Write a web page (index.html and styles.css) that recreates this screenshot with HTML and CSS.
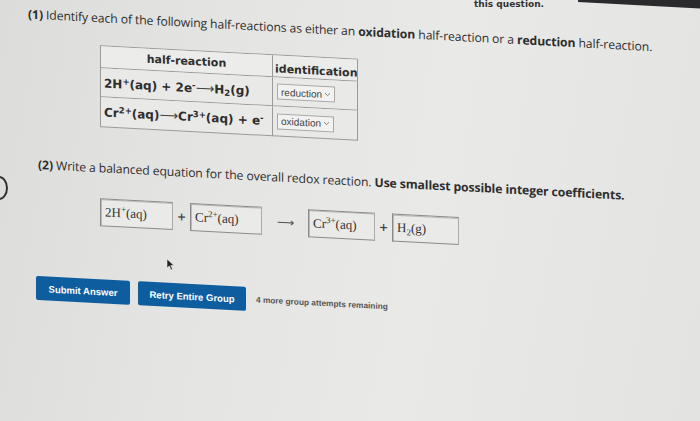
FILE: index.html
```html
<!DOCTYPE html>
<html>
<head>
<meta charset="utf-8">
<link rel="stylesheet" href="styles.css">
</head>
<body>
<div class="page">
  <p class="q q1"><b>(1)</b> Identify each of the following half-reactions as either an <b>oxidation</b> half-reaction or a <b>reduction</b> half-reaction.</p>
  <div class="hr">
    <div class="cell th c1"><span>half-reaction</span></div>
    <div class="cell th c2"><span>identification</span></div>
    <div class="cell td c1"><span>2H<sup>+</sup>(aq) + 2e<sup>-</sup><span class="ar">⟶</span>H<sub>2</sub>(g)</span></div>
    <div class="cell td c2"><span class="sel">reduction <svg width="7" height="5" viewBox="0 0 7 5"><path d="M1 1 L3.5 3.5 L6 1" fill="none" stroke="#777" stroke-width="0.9"/></svg></span></div>
    <div class="cell td c1"><span>Cr<sup>2+</sup>(aq)<span class="ar">⟶</span>Cr<sup>3+</sup>(aq) + e<sup>-</sup></span></div>
    <div class="cell td c2"><span class="sel">oxidation <svg width="7" height="5" viewBox="0 0 7 5"><path d="M1 1 L3.5 3.5 L6 1" fill="none" stroke="#777" stroke-width="0.9"/></svg></span></div>
  </div>
  <p class="q q2"><b>(2)</b> Write a balanced equation for the overall redox reaction. <b>Use smallest possible integer coefficients.</b></p>
  <div class="eq">
    <span class="box b1">2H<sup>+</sup>(aq)</span>
    <span class="plus">+</span>
    <span class="box b2">Cr<sup>2+</sup>(aq)</span>
    <span class="arrow">⟶</span>
    <span class="box b3">Cr<sup>3+</sup>(aq)</span>
    <span class="plus">+</span>
    <span class="box b4">H<sub>2</sub>(g)</span>
  </div>
  <div class="btns">
    <span class="btn submit">Submit Answer</span>
    <span class="btn retry">Retry Entire Group</span>
    <span class="remain">4 more group attempts remaining</span>
  </div>
</div>
<div class="topnote">this question.</div>
<div class="bezel"></div>
<div class="leftarc"></div>
<svg class="cursor" width="9" height="13" viewBox="0 0 9 13"><path d="M1 1 L1 10 L3.3 8 L5 12 L6.5 11.3 L4.8 7.5 L8 7.5 Z" fill="#222" stroke="#eee" stroke-width="0.6"/></svg>
</body>
</html>
```
FILE: styles.css
```css
html, body {
  margin: 0;
  padding: 0;
}
body {
  width: 700px;
  height: 421px;
  overflow: hidden;
  position: relative;
  background: linear-gradient(100deg, #dcdcda 0%, #e4e4e2 30%, #e9e9e7 60%, #e3e3e1 100%);
  font-family: "Open Sans", "DejaVu Sans", sans-serif;
  color: #2e2e2e;
}
.page {
  transform: skewY(3deg);
  transform-origin: 0 0;
  padding-top: 5px;
}
.q {
  margin: 0;
  font-size: 12.2px;
  line-height: 16px;
  white-space: nowrap;
  letter-spacing: -0.1px;
}
.q b { font-weight: 700; }
.q1 { margin-left: 28px; }
.q2 { margin-left: 38px; margin-top: 33px; }
.hr {
  display: grid;
  grid-template-columns: 172px 85px;
  grid-template-rows: 22px 29px 30px;
  width: 257px;
  margin: 19px 0 0 100px;
  border-top: 1px solid #9a9a9a;
  border-left: 1px solid #9a9a9a;
  font-family: "DejaVu Sans", sans-serif;
  font-weight: bold;
  font-size: 12px;
  color: #2e2e2e;
}
.cell {
  display: flex;
  align-items: center;
  border-right: 1px solid #9a9a9a;
  border-bottom: 1px solid #9a9a9a;
  padding: 0 3px;
  white-space: nowrap;
  overflow: hidden;
}
.th { background: #ececea; font-size: 11px; }
.th.c1 { justify-content: center; }
.th.c2 { padding: 5px 1px 0 2px; }
.td { background: #e9e9e7; }
.td.c2 { padding: 0 4px; }
.hr sup { font-size: 8.5px; vertical-align: 4px; line-height: 0; }
.hr sub { font-size: 8.5px; vertical-align: -2px; line-height: 0; }
.ar { font-weight: normal; font-size: 13px; color: #444; }
.sel {
  display: inline-flex;
  align-items: center;
  gap: 2px;
  height: 14px;
  padding: 0 3px;
  border: 1px solid #a8a8a8;
  background: #f2f2f0;
  font-family: "Liberation Sans", Arial, sans-serif;
  font-weight: normal;
  font-size: 10px;
  color: #444;
}
.eq {
  display: flex;
  align-items: center;
  margin: 22px 0 0 100px;
  font-family: "Liberation Serif", serif;
  font-size: 13px;
  color: #333;
}
.box {
  box-sizing: border-box;
  height: 28px;
  border: 1px solid #8a8a8a;
  border-right-color: #aaa;
  background: #eaeae8;
  padding: 5px 4px 0;
  box-shadow: inset 1px 1px 0 #bbb;
}
.box sup { font-size: 9px; vertical-align: 5px; line-height: 0; }
.box sub { font-size: 9px; vertical-align: -3px; line-height: 0; }
.b1 { width: 73px; }
.b2 { width: 72px; }
.b3 { width: 67px; }
.b4 { width: 67px; }
.plus { width: 17px; text-align: center; font-family: "DejaVu Sans", sans-serif; font-size: 11px; font-weight: bold; color: #444; }
.arrow { width: 46px; text-align: center; font-size: 12px; color: #555; padding-top: 3px; }
.btns {
  display: flex;
  align-items: center;
  margin: 53px 0 0 36px;
  font-family: "Liberation Sans", Arial, sans-serif;
}
.btn {
  display: flex;
  align-items: center;
  justify-content: center;
  height: 24px;
  background: #0d5d9f;
  color: #fff;
  font-weight: bold;
  font-size: 9.5px;
  border-radius: 2px;
}
.submit { width: 94px; }
.retry { width: 108px; margin-left: 8px; }
.remain {
  margin-left: 10px;
  font-size: 8.3px;
  font-weight: bold;
  color: #555;
}
.topnote {
  position: absolute;
  left: 474px;
  top: 0;
  font-family: "DejaVu Sans", sans-serif;
  font-weight: bold;
  font-size: 9px;
  line-height: 9px;
  color: #333;
}
.bezel {
  position: absolute;
  left: 578px;
  top: -20px;
  width: 200px;
  height: 22px;
  background: #2a2a2c;
  transform: rotate(3deg);
  transform-origin: 0 100%;
}
.leftarc {
  position: absolute;
  left: -10px;
  top: 176px;
  width: 14px;
  height: 20px;
  border: 2px solid #333;
  border-radius: 50%;
}
.cursor {
  position: absolute;
  left: 166px;
  top: 258px;
}
```
